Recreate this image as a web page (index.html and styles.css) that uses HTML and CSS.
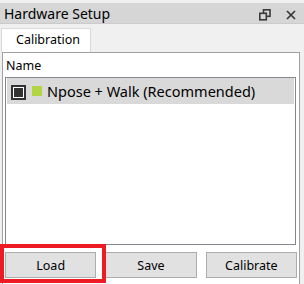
FILE: index.html
```html
<!DOCTYPE html>
<html>
<head>
<meta charset="utf-8">
<link rel="stylesheet" href="styles.css">
</head>
<body>
<div class="window">
  <div class="titlebar">
    <span class="title">Hardware Setup</span>
    <div class="controls">
      <svg class="icon-float" width="12" height="12" viewBox="0 0 12 12">
        <rect x="4.5" y="0.8" width="6.5" height="6.5" fill="none" stroke="#3a3a3a" stroke-width="1.6"/>
        <rect x="0.8" y="4.3" width="6.5" height="6.5" fill="#d6d6d6" stroke="#3a3a3a" stroke-width="1.6"/>
      </svg>
      <svg class="icon-close" width="10" height="10" viewBox="0 0 10 10">
        <path d="M1 1 L9 9 M9 1 L1 9" stroke="#333" stroke-width="1.6" fill="none"/>
      </svg>
    </div>
  </div>
  <div class="tabs">
    <div class="tab">Calibration</div>
  </div>
  <div class="page">
    <div class="label">Name</div>
    <div class="list">
      <div class="row selected">
        <span class="check"><span class="check-fill"></span></span>
        <span class="swatch"></span>
        <span class="row-text">Npose + Walk (Recommended)</span>
      </div>
    </div>
    <div class="buttons">
      <button class="btn">Load</button>
      <button class="btn">Save</button>
      <button class="btn">Calibrate</button>
    </div>
  </div>
  <div class="highlight"></div>
</div>
</body>
</html>
```
FILE: styles.css
```css
html, body {
  margin: 0;
  padding: 0;
  background: #f0f0f0;
  width: 304px;
  height: 284px;
  overflow: hidden;
  font-family: "Noto Sans", "Open Sans", sans-serif;
  color: #000;
}
.window {
  position: relative;
  width: 304px;
  height: 284px;
  padding-top: 3px;
  box-sizing: border-box;
  background: #f0f0f0;
}
.titlebar {
  height: 20px;
  background: #d6d6d6;
  border-bottom: 1px solid #cbcbcb;
  display: flex;
  align-items: center;
  justify-content: space-between;
  padding: 0 8px 0 4px;
}
.title {
  font-size: 14px;
  line-height: 20px;
  padding-top: 1px;
}
.controls {
  display: flex;
  align-items: center;
  gap: 15px;
  padding-top: 3px;
}
.icon-float, .icon-close { display: block; }
.tabs {
  height: 28px;
  display: flex;
  align-items: flex-end;
  padding-left: 1px;
}
.tab {
  width: 90px;
  height: 24px;
  background: #fff;
  border: 1px solid #d9d9d9;
  border-bottom: none;
  font-size: 12.5px;
  line-height: 22px;
  padding-left: 14px;
  box-sizing: border-box;
}
.page {
  margin-left: 2px;
  width: 298px;
  height: 240px;
  box-sizing: border-box;
  border: 1px solid #a0a0a0;
  background: #fff;
  padding: 0 3px 0 2px;
}
.label {
  font-size: 12.5px;
  line-height: 18px;
  padding: 4px 0 0 1px;
  height: 24px;
  box-sizing: border-box;
}
.list {
  height: 168px;
  border: 1px solid #828790;
  box-sizing: border-box;
  padding: 0 1px;
}
.row {
  height: 26px;
  display: flex;
  align-items: center;
}
.row.selected { background: #d9d9d9; }
.check {
  width: 15px;
  height: 15px;
  box-sizing: border-box;
  border: 2px solid #333;
  background: #fff;
  margin-left: 4px;
  margin-top: 2px;
  display: flex;
  align-items: center;
  justify-content: center;
}
.check-fill {
  width: 9px;
  height: 9px;
  background: #333;
}
.swatch {
  width: 10px;
  height: 10px;
  background: #b3d443;
  margin-left: 6px;
}
.row-text {
  font-size: 14.5px;
  margin-left: 5px;
  line-height: 20px;
}
.buttons {
  display: grid;
  grid-template-columns: repeat(3, 1fr);
  gap: 9px;
  margin-top: 7px;
  width: 292px;
}
.btn {
  height: 26px;
  background: #e1e1e1;
  border: 1px solid #adadad;
  font-family: "Noto Sans", "Open Sans", sans-serif;
  font-size: 12.5px;
  color: #000;
  padding: 0;
  margin: 0;
}
.highlight {
  position: absolute;
  left: 0;
  top: 244px;
  width: 106px;
  height: 39px;
  box-sizing: border-box;
  border: 4px solid #ed1c24;
}
```
